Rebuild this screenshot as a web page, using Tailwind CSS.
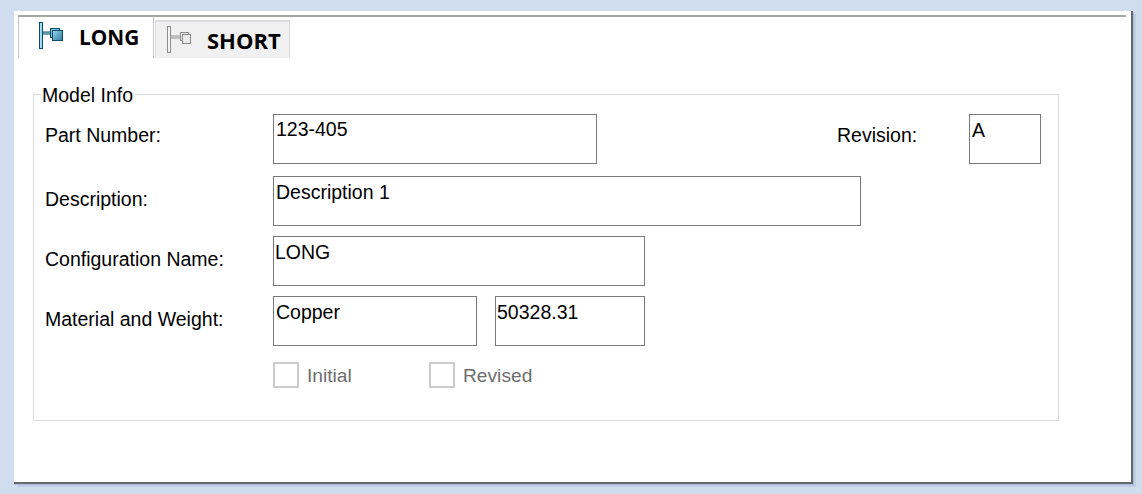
<!DOCTYPE html>
<html lang="en">
<head>
  <meta charset="UTF-8" />
  <title>Model Info</title>
  <script src="https://cdn.jsdelivr.net/npm/@tailwindcss/browser@4"></script>
</head>
<body class="bg-[#d0ddee] h-[494px] w-[1142px] overflow-hidden font-['Liberation_Sans',sans-serif] text-[19.5px] text-black">
  <div class="ml-[14px] mt-[11px] w-[1119px] h-[473px] bg-white border-r-2 border-b-2 border-[#666a70] shadow-[1px_1px_0_#aebcd4,3px_3px_0_#c0cde2] pl-[4px] pr-[5px] pt-[4px]">
    <!-- Tabs -->
    <div class="border-t-2 border-[#a5a7a2] h-[43px] flex items-end">
      <div class="w-[136px] h-[41px] bg-white border-l border-r border-[#c4c4c4] flex items-center pl-[19px] gap-[15px] self-start">
        <svg class="-mt-[3px]" width="26" height="28" viewBox="0 0 26 28">
          <defs>
            <linearGradient id="cube" x1="0" y1="0" x2="1" y2="1">
              <stop offset="0" stop-color="#9ad6ee" />
              <stop offset="1" stop-color="#2f7ba3" />
            </linearGradient>
          </defs>
          <rect x="1.5" y="0.5" width="3" height="26" fill="#9ddcf2" stroke="#0c4a68" />
          <path d="M5 11h8" stroke="#0c4a68" stroke-width="3" />
          <path d="M5 11h8" stroke="#9ddcf2" stroke-width="1" />
          <rect x="12.5" y="6.5" width="9" height="9" fill="#7fc4e2" stroke="#0c4a68" />
          <rect x="14.5" y="8.5" width="10" height="10" fill="url(#cube)" stroke="#0c4a68" />
        </svg>
        <span class="font-['Open_Sans',sans-serif] font-bold text-[20.8px] leading-none -mt-[1px]">LONG</span>
      </div>
      <div class="ml-px w-[135px] h-[38px] bg-[#f0f0f0] border-t-2 border-l border-r border-[#dcdcdc] flex items-center pl-[11px] gap-[14px]">
        <svg width="26" height="28" viewBox="0 0 26 28">
          <rect x="0.5" y="0.5" width="3" height="26" fill="#f4f4f4" stroke="#8c8c8c" />
          <path d="M4 11h9" stroke="#8c8c8c" stroke-width="3" />
          <path d="M4 11h9" stroke="#f4f4f4" stroke-width="1" />
          <rect x="13.5" y="6.5" width="8" height="8" fill="#e8e8e8" stroke="#8c8c8c" />
          <rect x="15.5" y="8.5" width="8" height="9" fill="#ececec" stroke="#8c8c8c" />
        </svg>
        <span class="font-['Open_Sans',sans-serif] font-bold text-[22px] leading-none">SHORT</span>
      </div>
    </div>

    <!-- Model Info group -->
    <div class="relative ml-[15px] mt-[36px] w-[1026px] h-[327px] border border-[#dcdcdc] pt-[19px] pl-[11px]">
      <span class="absolute left-[7px] -top-[10px] bg-white px-px leading-[20px]">Model Info</span>

      <div class="flex h-[50px]">
        <label class="w-[228px] pt-[11px] leading-[20px]">Part Number:</label>
        <div class="w-[324px] border border-[#7a7a7a] px-[2px] leading-[29px]">123-405</div>
        <label class="ml-[240px] w-[132px] pt-[11px] leading-[20px]">Revision:</label>
        <div class="w-[72px] border border-[#7a7a7a] px-[2px] leading-[31px]">A</div>
      </div>

      <div class="flex h-[50px] mt-[12px]">
        <label class="w-[228px] pt-[13px] leading-[20px]">Description:</label>
        <div class="w-[588px] border border-[#7a7a7a] px-[2px] leading-[31px]">Description 1</div>
      </div>

      <div class="flex h-[50px] mt-[10px]">
        <label class="w-[228px] pt-[13px] leading-[20px]">Configuration Name:</label>
        <div class="w-[372px] border border-[#7a7a7a] px-[1px] leading-[31px]">LONG</div>
      </div>

      <div class="flex h-[50px] mt-[10px]">
        <label class="w-[228px] pt-[13px] leading-[20px]">Material and Weight:</label>
        <div class="w-[204px] border border-[#7a7a7a] px-[2px] leading-[31px]">Copper</div>
        <div class="ml-[18px] w-[150px] border border-[#7a7a7a] px-[1px] leading-[31px]">50328.31</div>
      </div>

      <div class="flex items-center h-[26px] mt-[16px] ml-[228px] text-[19.2px] leading-[28px] text-[#6d6d6d]">
        <span class="w-[26px] h-[26px] border-2 border-[#cccccc]"></span>
        <span class="ml-[8px] w-[122px] mt-[2px]">Initial</span>
        <span class="w-[26px] h-[26px] border-2 border-[#cccccc]"></span>
        <span class="ml-[8px] mt-[2px]">Revised</span>
      </div>
    </div>
  </div>
</body>
</html>
